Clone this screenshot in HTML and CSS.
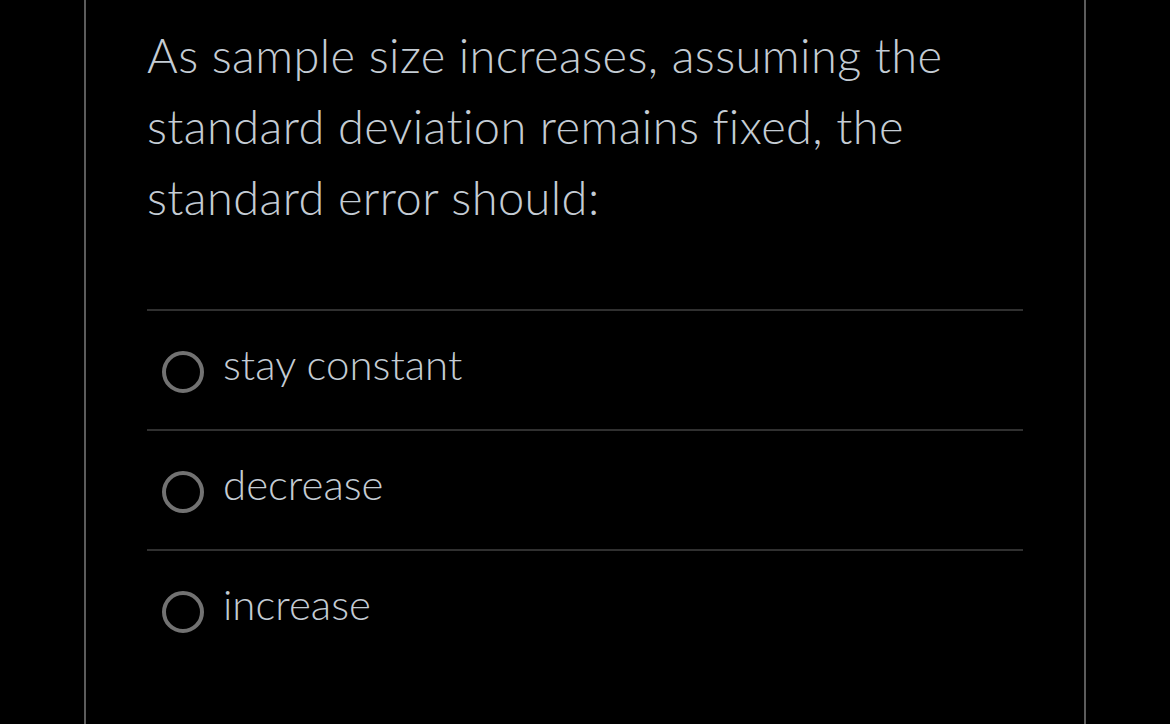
FILE: index.html
```html
<!DOCTYPE html>
<html lang="en">
<head>
<meta charset="utf-8">
<title>Question</title>
<link rel="stylesheet" href="styles.css">
</head>
<body>
<div class="panel">
  <p class="question">As sample size increases, assuming the standard deviation remains fixed, the standard error should:</p>
  <ul class="options">
    <li class="option"><span class="radio"></span><span class="label">stay constant</span></li>
    <li class="option"><span class="radio"></span><span class="label">decrease</span></li>
    <li class="option"><span class="radio"></span><span class="label">increase</span></li>
  </ul>
</div>
</body>
</html>
```
FILE: styles.css
```css
html, body {
  margin: 0;
  padding: 0;
  background: #000;
  height: 100%;
  overflow: hidden;
}
body {
  font-family: "Lato Light", Lato, "Open Sans", sans-serif;
  font-weight: 300;
  color: #c4ccd4;
}
.panel {
  box-sizing: border-box;
  margin-left: 84px;
  width: 1002px;
  height: 100%;
  border-left: 2px solid #5c5c5c;
  border-right: 2px solid #5c5c5c;
  padding: 20px 61px 0 61px;
}
.question {
  margin: 0;
  font-size: 47px;
  line-height: 71px;
  letter-spacing: 0.4px;
  width: 860px;
}
.options {
  list-style: none;
  margin: 76px 0 0 0;
  padding: 0;
}
.option {
  display: flex;
  align-items: center;
  height: 118px;
  border-top: 2px solid #303030;
  padding-left: 15px;
}
.radio {
  box-sizing: border-box;
  width: 42px;
  height: 42px;
  border: 4px solid #727272;
  border-radius: 50%;
  flex: none;
  margin-top: 4px;
}
.label {
  margin-left: 19px;
  font-size: 42px;
  line-height: 50px;
  margin-bottom: 12px;
}
```
